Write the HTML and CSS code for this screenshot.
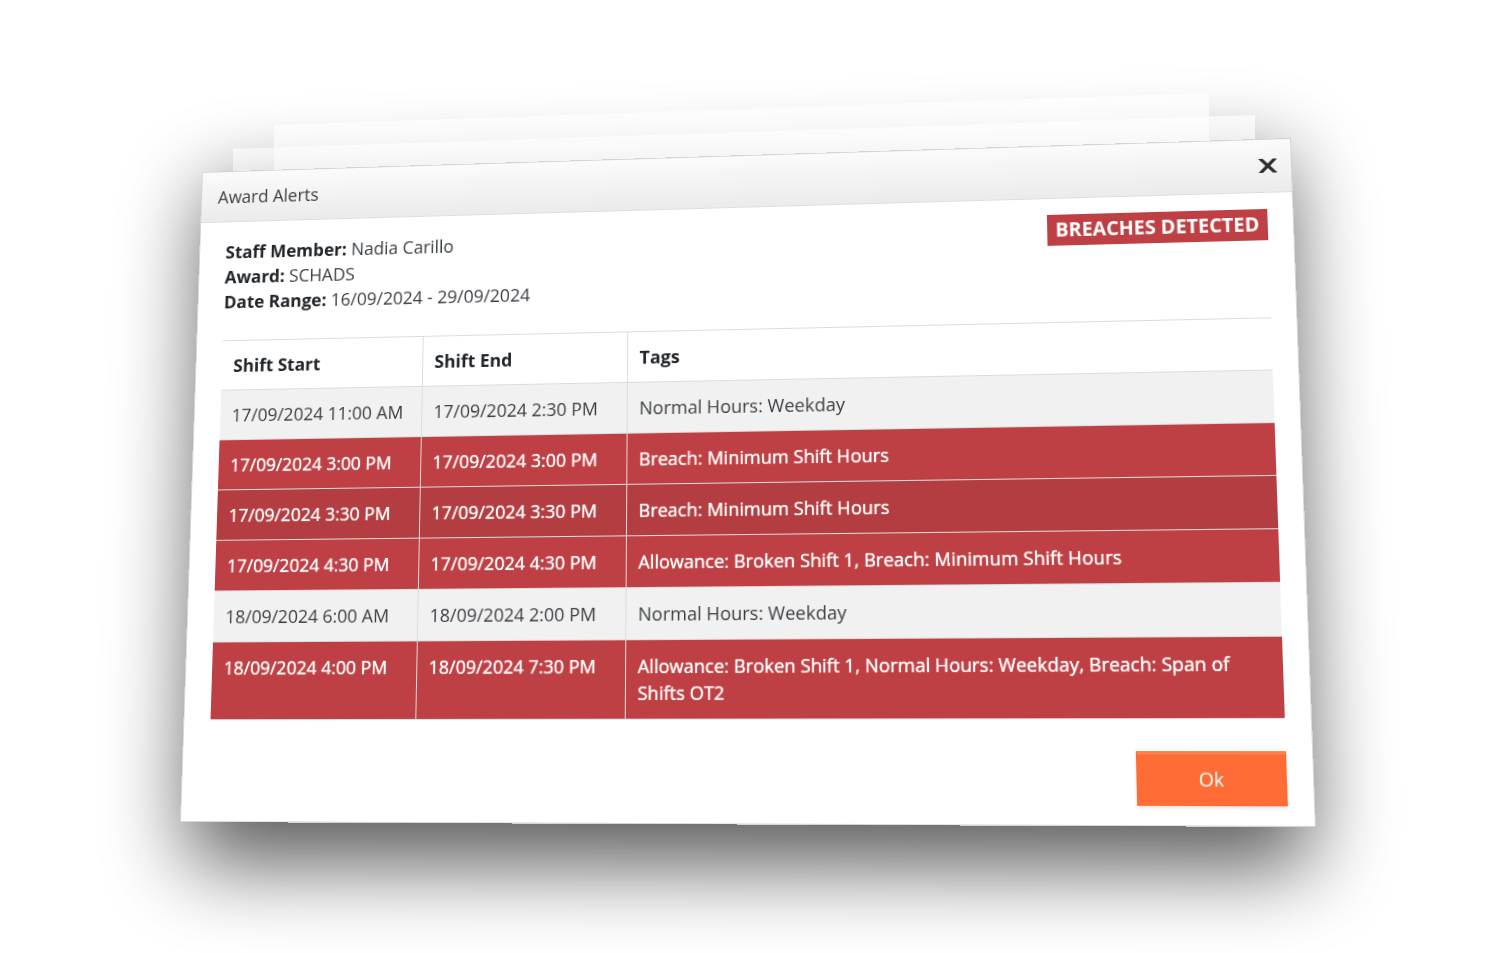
FILE: index.html
```html
<!DOCTYPE html>
<html lang="en">
<head>
<meta charset="utf-8">
<title>Award Alerts</title>
<link rel="stylesheet" href="styles.css">
</head>
<body>
<main class="stage">
  <svg class="backdrop" viewBox="0 0 1499 953" aria-hidden="true">
    <defs>
      <filter id="soft" x="-20%" y="-30%" width="140%" height="160%"><feGaussianBlur stdDeviation="42"/></filter>
      <linearGradient id="sheet" x1="0" y1="0" x2="0" y2="1">
        <stop offset="0" stop-color="#fff" stop-opacity=".75"/>
        <stop offset="1" stop-color="#fff" stop-opacity=".45"/>
      </linearGradient>
    </defs>
    <polygon points="206,190 1287,158 1312,868 186,864" fill="#000" opacity=".64" filter="url(#soft)"/>
    <polygon points="274,125 1209,93 1209,190 274,190" fill="url(#sheet)"/>
    <polygon points="233,149 1255,115 1255,190 233,190" fill="url(#sheet)"/>
  </svg>
  <section class="dialog" role="dialog" aria-labelledby="dialog-title">
    <header class="dialog-header">
      <h1 class="dialog-title" id="dialog-title">Award Alerts</h1>
      <button class="close" type="button" aria-label="Close">
        <svg class="close-icon" viewBox="0 0 20 16" aria-hidden="true"><path d="M1 1h4.200L10 5.700 14.800 1H19l-6.700 7L19 15h-4.200L10 10.300 5.200 15H1l6.700-7z" fill="#2b2b2b"/></svg>
      </button>
    </header>
    <div class="dialog-body">
      <div class="summary">
        <div class="details">
          <div><b>Staff Member:</b> Nadia Carillo</div>
          <div><b>Award:</b> SCHADS</div>
          <div><b>Date Range:</b> 16/09/2024 - 29/09/2024</div>
        </div>
        <strong class="badge">BREACHES DETECTED</strong>
      </div>
      <table class="shifts">
        <colgroup><col class="col-time"><col class="col-time"><col></colgroup>
        <thead>
          <tr><th scope="col">Shift Start</th><th scope="col">Shift End</th><th scope="col">Tags</th></tr>
        </thead>
        <tbody>
          <tr class="normal"><td>17/09/2024 11:00 AM</td><td>17/09/2024 2:30 PM</td><td>Normal Hours: Weekday</td></tr>
          <tr class="breach"><td>17/09/2024 3:00 PM</td><td>17/09/2024 3:00 PM</td><td>Breach: Minimum Shift Hours</td></tr>
          <tr class="breach breach-alt"><td>17/09/2024 3:30 PM</td><td>17/09/2024 3:30 PM</td><td>Breach: Minimum Shift Hours</td></tr>
          <tr class="breach"><td>17/09/2024 4:30 PM</td><td>17/09/2024 4:30 PM</td><td>Allowance: Broken Shift 1, Breach: Minimum Shift Hours</td></tr>
          <tr class="normal"><td>18/09/2024 6:00 AM</td><td>18/09/2024 2:00 PM</td><td>Normal Hours: Weekday</td></tr>
          <tr class="breach"><td>18/09/2024 4:00 PM</td><td>18/09/2024 7:30 PM</td><td>Allowance: Broken Shift 1, Normal Hours: Weekday, Breach: Span of Shifts OT2</td></tr>
        </tbody>
      </table>
      <footer class="actions">
        <button class="ok" type="button">Ok</button>
      </footer>
    </div>
  </section>
</main>
</body>
</html>
```
FILE: styles.css
```css
* { box-sizing: border-box; }

body {
  margin: 0;
  background: #fff;
  color: #3a3e42;
  font: 18px/26px "Open Sans", "Noto Sans", sans-serif;
}

.stage {
  position: relative;
  display: flex;
  justify-content: center;
  align-items: flex-start;
  min-height: 100vh;
  padding-top: 172px;
  overflow: hidden;
}

.backdrop {
  position: absolute;
  top: 0;
  left: 0;
  width: 100%;
}

/* The card is tilted back as a whole */
.dialog {
  position: relative;
  width: 74vw;
  max-width: 1100px;
  background: #fff;
  border: 1px solid #d4d4d4;
  transform-origin: 0 0;
  transform: matrix3d(0.934042, -0.029165, 0, -0.0000512673,
                      -0.032148, 0.943871, 0, -0.0000608061,
                      0, 0, 1, 0,
                      2, 0, 0, 1);
}

.dialog-header {
  display: flex;
  align-items: center;
  justify-content: space-between;
  height: 53px;
  padding: 0 12px 0 17px;
  background: linear-gradient(#fbfbfb, #ebebeb);
  border-bottom: 1px solid #dedede;
}

.dialog-title {
  margin: 0;
  font-size: 18px;
  font-weight: 400;
}

.close {
  display: flex;
  padding: 0;
  border: 0;
  background: none;
}

.close-icon {
  width: 20px;
  height: 16px;
}

.dialog-body { padding: 16px 24px 18px 27px; }

.summary {
  display: flex;
  justify-content: space-between;
  align-items: flex-start;
  padding-bottom: 27px;
}

.details { padding-top: 2px; }

.details b { color: #212529; }

.badge {
  padding: 2px 8px 3px;
  background: #be4044;
  color: #fff;
  font-size: 19px;
}

.shifts {
  width: 100%;
  table-layout: fixed;
  border-collapse: collapse;
}

.col-time { width: 209px; }

.shifts th,
.shifts td {
  padding: 12px 10px 12px 12px;
  border: 1px solid #dcdcdc;
  text-align: left;
  vertical-align: top;
}

.shifts th { color: #212529; }

.shifts tr > :first-child { border-left: 0; }
.shifts tr > :last-child { border-right: 0; }

.normal { background: #f1f1f1; }

.breach {
  background: #be4044;
  color: #fff;
  font-weight: 500;
  text-shadow: 0 0 1px #fff;
}

.breach-alt { background: #b33d40; }

.actions {
  display: flex;
  justify-content: flex-end;
  padding-top: 30px;
}

.ok {
  width: 139px;
  height: 51px;
  padding: 0;
  border: 1px solid #ff6a30;
  background: #ff6c35;
  box-shadow: inset 0 2px 0 #ff8557, 0 2px 3px rgba(0, 0, 0, .1);
  color: #fff;
  font: inherit;
}
```
